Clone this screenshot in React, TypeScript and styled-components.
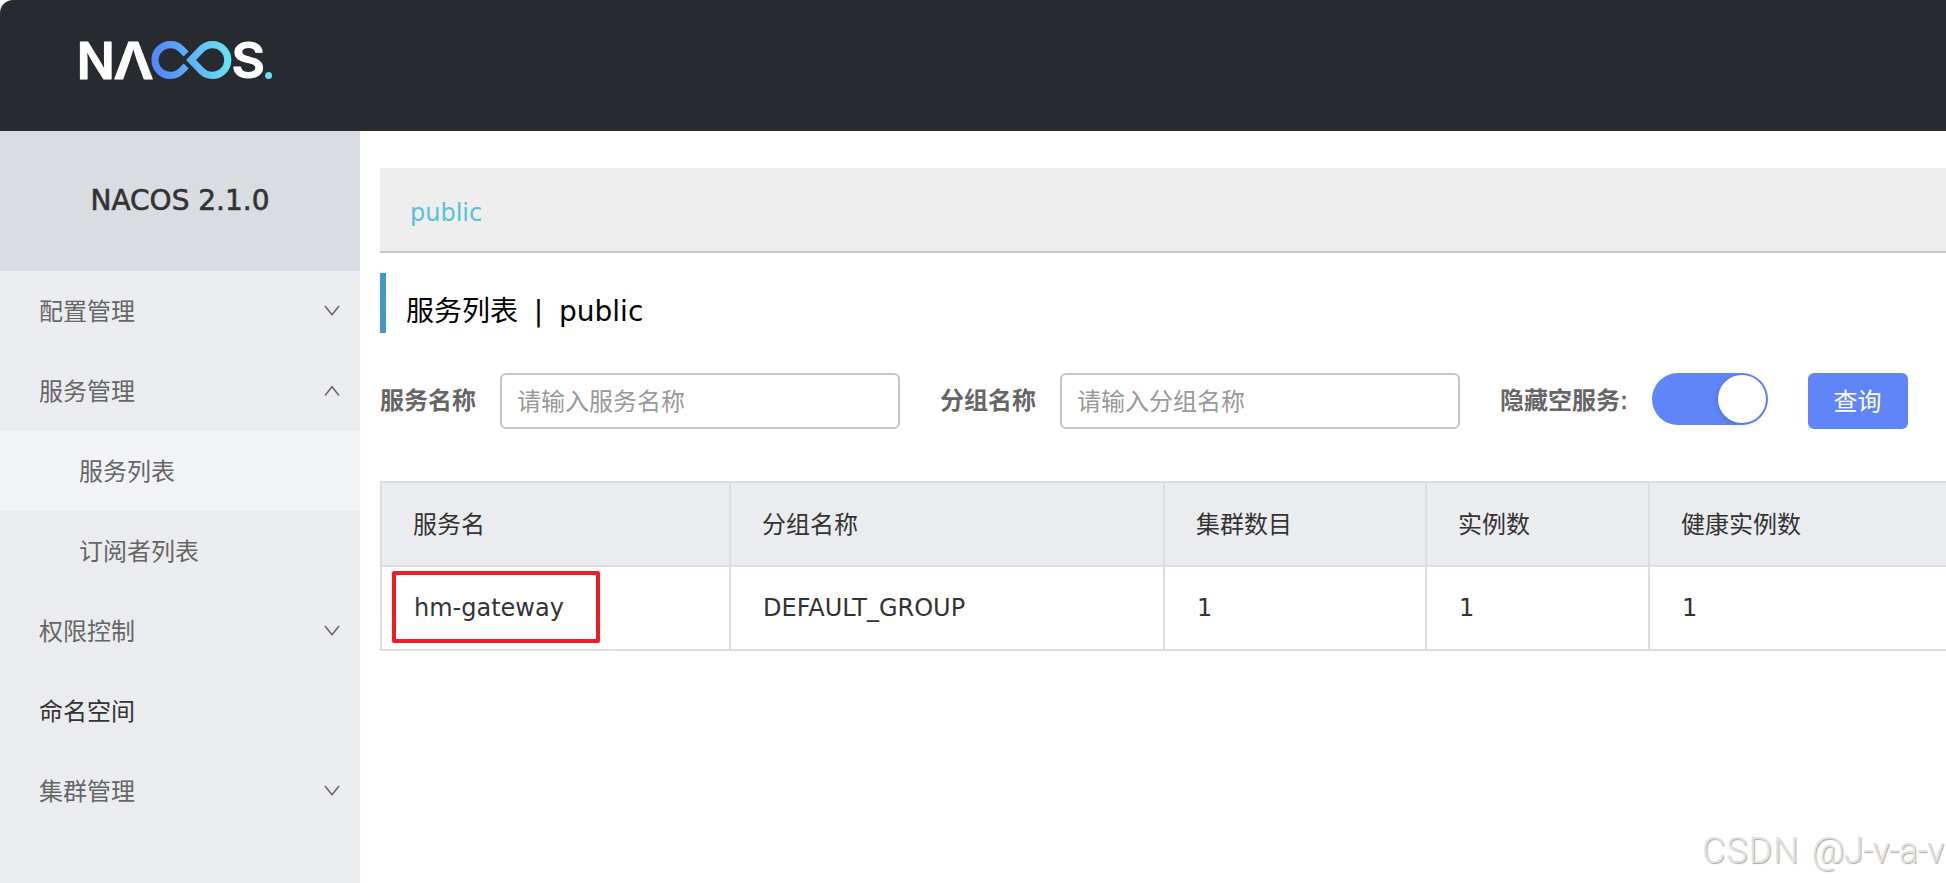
import React from "react";
import styled, { createGlobalStyle } from "styled-components";

const GlobalStyle = createGlobalStyle`
  * { box-sizing: border-box; }
  body {
    margin: 0;
    background: #fff;
    overflow: hidden;
    font-family: "DejaVu Sans", "Noto Sans CJK SC", sans-serif;
    font-size: 24px;
    color: #333;
  }
`;

const Page = styled.div`
  position: relative;
  display: flex;
  flex-direction: column;
  width: 1946px;
  height: 883px;
  overflow: hidden;
`;

const Header = styled.header`
  flex: none;
  height: 131px;
  padding: 10px 0 0 60px;
  background: #272a2f;
  border-top-left-radius: 13px;
`;

const Body = styled.div`
  display: flex;
  flex: 1;
  min-height: 0;
`;

const Sidebar = styled.nav`
  flex: none;
  width: 360px;
  background: #ebecf0;
`;

const Version = styled.div`
  height: 140px;
  line-height: 140px;
  text-align: center;
  font-size: 28px;
  background: #d9dce1;
  -webkit-text-stroke: 0.6px #333;
`;

const MenuItem = styled.div<{ $sub?: boolean; $active?: boolean; $dark?: boolean }>`
  display: flex;
  align-items: center;
  justify-content: space-between;
  height: 80px;
  padding: 0 20px 0 ${(p) => (p.$sub ? 79 : 39)}px;
  color: ${(p) => (p.$dark ? "#333" : "#666")};
  background: ${(p) => (p.$active ? "#f2f3f7" : "transparent")};
`;

const MenuText = styled.span`
  padding-bottom: 3px;
`;

const Main = styled.main`
  flex: 1;
  min-width: 0;
  padding: 37px 0 0 20px;
`;

const Namespace = styled.div`
  height: 85px;
  padding-left: 30px;
  line-height: 90px;
  color: #59bfdb;
  background: #eee;
  border-bottom: 2px solid #c8c8c8;
`;

const Title = styled.h1`
  height: 60px;
  margin: 20px 0 40px;
  padding-left: 20px;
  border-left: 6px solid #4298c8;
  font-size: 28px;
  font-weight: 400;
  line-height: 77px;
  word-spacing: -1px;
  white-space: pre;
  color: #000;
`;

const Form = styled.div`
  display: flex;
  align-items: flex-start;
  height: 108px;
`;

const Label = styled.label`
  margin-right: 24px;
  line-height: 56px;
  font-weight: 700;
  color: #666;
  white-space: nowrap;
`;

const Colon = styled.span`
  font-weight: 400;
  -webkit-text-stroke: 0.5px #666;
`;

const Input = styled.input`
  width: 400px;
  height: 56px;
  margin-right: 40px;
  padding: 1px 15px 0;
  border: 2px solid #c4c6cf;
  border-radius: 6px;
  outline: none;
  font: inherit;
  &::placeholder { color: #999; opacity: 1; }
`;

const Switch = styled.div`
  display: flex;
  justify-content: flex-end;
  width: 116px;
  height: 52px;
  margin-right: 40px;
  padding: 2px;
  border-radius: 26px;
  background: #6085f9;
`;

const Knob = styled.span`
  width: 48px;
  height: 48px;
  border-radius: 50%;
  background: #fff;
  box-shadow: -1px 2px 5px rgba(0, 0, 0, 0.13);
`;

const Button = styled.button`
  width: 100px;
  height: 56px;
  padding: 0 1px 4px 0;
  border: 0;
  border-radius: 6px;
  background: #6085f9;
  color: #fff;
  font: inherit;
`;

const Table = styled.div`
  width: 1700px;
  border: 2px solid #dcdde3;
`;

const Row = styled.div<{ $head?: boolean }>`
  display: grid;
  grid-template-columns: 349px 434px 262px 223px 1fr;
  height: ${(p) => (p.$head ? 84 : 82)}px;
  line-height: ${(p) => (p.$head ? 84 : 82)}px;
  background: ${(p) => (p.$head ? "#ebecf0" : "#fff")};
  border-bottom: ${(p) => (p.$head ? "2px solid #dcdde3" : "0")};
`;

const Cell = styled.div<{ $head?: boolean }>`
  position: relative;
  height: 82px;
  padding-left: ${(p) => (p.$head ? 31 : 32)}px;
  border-right: 2px solid #dcdde3;
`;

const Highlight = styled.div`
  position: absolute;
  left: 10px;
  top: 4px;
  width: 208px;
  height: 72px;
  border: 4px solid #ee1c25;
  border-radius: 2px;
`;

const Watermark = styled.div`
  position: absolute;
  left: 1702px;
  top: 830px;
  display: flex;
  gap: 12px;
  font-family: Roboto, "Liberation Sans", sans-serif;
  font-size: 36px;
  font-weight: 300;
  line-height: 42px;
  color: #e2e2e2;
  white-space: nowrap;
  text-shadow: 1px 1px 1px #aaa;
`;

const WatermarkPart = styled.span<{ $spacing: number }>`
  letter-spacing: ${(p) => p.$spacing}px;
`;

const Chevron = ({ up }: { up?: boolean }) => (
  <svg width="16" height="12" viewBox="0 0 16 12" fill="none" stroke="#666" strokeWidth="1.5">
    <path d={up ? "M1 10.5 8 1.7 15 10.5" : "M1 1 8 9.8 15 1"} />
  </svg>
);

const Logo = () => (
  <svg width="240" height="100" viewBox="60 10 240 100" role="img" aria-label="Nacos">
    <defs>
      <linearGradient id="loop" gradientUnits="userSpaceOnUse" x1="152" y1="66" x2="231" y2="56">
        <stop offset="0.1" stopColor="#548afb" />
        <stop offset="0.95" stopColor="#69e0f2" />
      </linearGradient>
    </defs>
    <g fill="#fff" stroke="#fff" strokeLinejoin="round" fontFamily="Inter, sans-serif" fontWeight="600" fontSize="51">
      <text x="76.8" y="78.5" textLength="38" lengthAdjust="spacingAndGlyphs" strokeWidth="1">N</text>
      <text x="113.5" y="78.5" textLength="40" lengthAdjust="spacingAndGlyphs" strokeWidth="1">Λ</text>
      <text x="231.6" y="78" fontSize="49.5" textLength="33.5" lengthAdjust="spacingAndGlyphs" strokeWidth="1">S</text>
    </g>
    <g fill="none" stroke="url(#loop)" strokeWidth="7.2">
      <path d="M186.2 54 181.2 49A15.4 15.4 0 1 0 181.2 71L186.2 66" />
      <path d="M191 60 201.4 49.2A15.4 15.4 0 1 1 201.4 70.8Z" />
    </g>
    <circle cx="268.6" cy="75.6" r="3.5" fill="#69e0f2" />
  </svg>
);

const menu = [
  { text: "配置管理", arrow: "down" },
  { text: "服务管理", arrow: "up" },
  { text: "服务列表", sub: true, active: true },
  { text: "订阅者列表", sub: true },
  { text: "权限控制", arrow: "down" },
  { text: "命名空间", dark: true },
  { text: "集群管理", arrow: "down" },
];

const columns = ["服务名", "分组名称", "集群数目", "实例数", "健康实例数"];
const service = ["hm-gateway", "DEFAULT_GROUP", "1", "1", "1"];

export default function App() {
  return (
    <Page>
      <GlobalStyle />
      <Header>
        <Logo />
      </Header>
      <Body>
        <Sidebar>
          <Version>NACOS 2.1.0</Version>
          {menu.map((m) => (
            <MenuItem key={m.text} $sub={m.sub} $active={m.active} $dark={m.dark}>
              <MenuText>{m.text}</MenuText>
              {m.arrow && <Chevron up={m.arrow === "up"} />}
            </MenuItem>
          ))}
        </Sidebar>
        <Main>
          <Namespace>public</Namespace>
          <Title>{"服务列表  |  public"}</Title>
          <Form>
            <Label>服务名称</Label>
            <Input placeholder="请输入服务名称" />
            <Label>分组名称</Label>
            <Input placeholder="请输入分组名称" />
            <Label>
              隐藏空服务<Colon>:</Colon>
            </Label>
            <Switch>
              <Knob />
            </Switch>
            <Button>查询</Button>
          </Form>
          <Table>
            <Row $head>
              {columns.map((c) => (
                <Cell key={c} $head>
                  {c}
                </Cell>
              ))}
            </Row>
            <Row>
              {service.map((v, i) => (
                <Cell key={i}>
                  {v}
                  {i === 0 && <Highlight />}
                </Cell>
              ))}
            </Row>
          </Table>
        </Main>
      </Body>
      <Watermark>
        <WatermarkPart $spacing={0.9}>CSDN</WatermarkPart>
        <WatermarkPart $spacing={-0.7}>@J-v-a-v</WatermarkPart>
      </Watermark>
    </Page>
  );
}
